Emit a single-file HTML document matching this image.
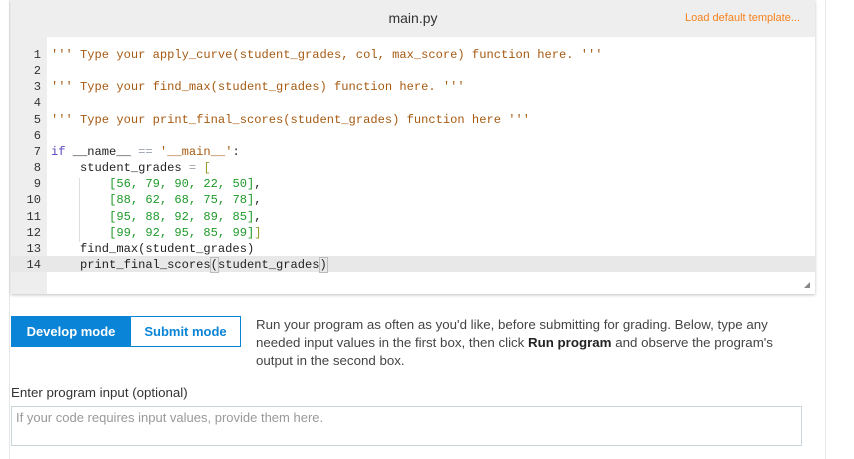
<!DOCTYPE html>
<html><head><meta charset="utf-8"><style>
*{margin:0;padding:0;box-sizing:border-box}
body{width:854px;height:459px;background:#fff;position:relative;overflow:hidden;font-family:"Liberation Sans",sans-serif}
.vl{position:absolute;top:0;bottom:0;width:1px;background:#e6e6e6}
.panel{position:absolute;left:11px;top:0;width:804px;height:294px;background:#fff;box-shadow:0 1px 3px rgba(0,0,0,.25)}
.hdr{height:37px;background:#eeeeee;position:relative}
.hdr .t{position:absolute;left:0;right:0;text-align:center;top:10px;font-size:14px;color:#333}
.hdr .l{position:absolute;right:15px;top:12px;font-size:11px;color:#f5821f}
.gut{position:absolute;left:0;top:37px;width:36px;bottom:0;background:#eeeeee}
.act{position:absolute;left:0;right:0;top:256px;height:16.2px;background:#e8e8e8}
.code{position:absolute;left:0;top:47px;font-family:"Liberation Mono",monospace;font-size:12.1px;line-height:16.15px;white-space:pre;color:#222}
.ln{display:inline-block;width:30px;text-align:right;color:#333;margin-right:10px}
.s{color:#a65a12}.k{color:#5a48c8}.o{color:#9aa3b0}.n{color:#1f9a2a}.b{color:#9a9a30}
.guide{position:absolute;left:68px;top:178px;width:1px;height:64px;background:#ddd}
.btn{position:absolute;top:316px;height:31px;border:1px solid #0a84d6;font-weight:bold;font-size:13px;line-height:29px;text-align:center}
.desc{position:absolute;left:256px;top:316px;width:540px;font-size:13.3px;line-height:18px;color:#444}
.lab{position:absolute;left:11px;top:385px;font-size:13.3px;color:#333}
.inp{position:absolute;left:11px;top:406px;width:791px;height:40px;border:1px solid #c9d6da;font-size:13px;color:#999;padding:3px 4px}
</style></head><body>
<div class="vl" style="left:9px"></div>
<div class="vl" style="left:825px"></div>
<div class="panel">
<div class="hdr"><div class="t">main.py</div><div class="l">Load default template...</div></div>
<div class="gut"></div>
<div class="act"></div>
<div class="guide"></div>
<div class="code"><span class="ln">1</span><span class="s">''' Type your apply_curve(student_grades, col, max_score) function here. '''</span>
<span class="ln">2</span>
<span class="ln">3</span><span class="s">''' Type your find_max(student_grades) function here. '''</span>
<span class="ln">4</span>
<span class="ln">5</span><span class="s">''' Type your print_final_scores(student_grades) function here '''</span>
<span class="ln">6</span>
<span class="ln">7</span><span class="k">if</span> __name__ <span class="o">==</span> <span class="s">'__main__'</span>:
<span class="ln">8</span>    student_grades <span class="o">=</span> <span class="b">[</span>
<span class="ln">9</span>        <span class="n">[56, 79, 90, 22, 50]</span>,
<span class="ln">10</span>        <span class="n">[88, 62, 68, 75, 78]</span>,
<span class="ln">11</span>        <span class="n">[95, 88, 92, 89, 85]</span>,
<span class="ln">12</span>        <span class="n">[99, 92, 95, 85, 99]</span><span class="b">]</span>
<span class="ln">13</span>    find_max(student_grades)
<span class="ln">14</span>    print_final_scores<span style="outline:1px solid #bbb">(</span>student_grades<span style="outline:1px solid #bbb">)</span></div>
<div style="position:absolute;right:5px;bottom:6px;width:0;height:0;border-left:6px solid transparent;border-bottom:6px solid #888"></div>
</div>
<div class="btn" style="left:11px;width:120px;background:#0a84d6;color:#fff">Develop mode</div>
<div class="btn" style="left:130px;width:111px;background:#fff;color:#0a84d6">Submit mode</div>
<div class="desc">Run your program as often as you'd like, before submitting for grading. Below, type any needed input values in the first box, then click <b style="color:#222">Run program</b> and observe the program's output in the second box.</div>
<div class="lab">Enter program input (optional)</div>
<div class="inp">If your code requires input values, provide them here.</div>
</body></html>
